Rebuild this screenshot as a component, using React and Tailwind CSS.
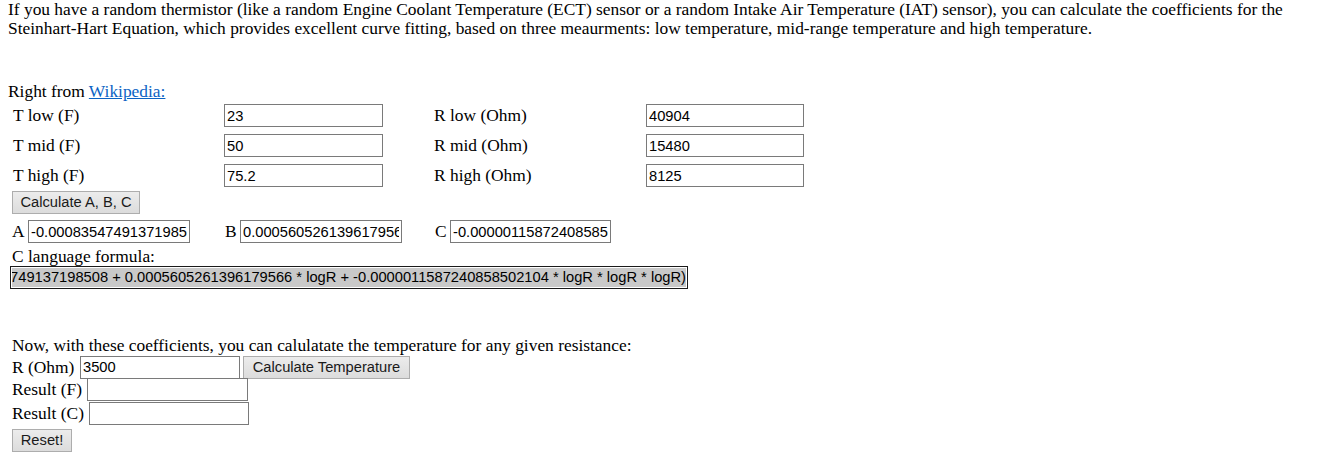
import { useState } from 'react'

const serif = { fontFamily: '"Liberation Serif", "Times New Roman", serif' }

const inputCls =
  'h-[23px] border border-[#7a7a7a] bg-white px-[2px] text-[14.7px] text-black outline-none font-["Liberation_Sans",Arial,sans-serif]'
const btnCls =
  'h-[23px] border border-[#adadad] bg-gradient-to-b from-[#ececec] to-[#dcdcdc] px-[7px] text-[14.7px] text-[#1a1a1a] font-["Liberation_Sans",Arial,sans-serif] leading-none whitespace-nowrap'

const fToK = (f) => ((f - 32) * 5) / 9 + 273.15

export default function App() {
  const [t, setT] = useState({ low: '23', mid: '50', high: '75.2' })
  const [r, setR] = useState({ low: '40904', mid: '15480', high: '8125' })
  const [abc, setAbc] = useState({
    a: '-0.0008354749137198508',
    b: '0.0005605261396179566',
    c: '-0.0000011587240858502104',
  })
  const [rOhm, setROhm] = useState('3500')
  const [resF, setResF] = useState('')
  const [resC, setResC] = useState('')

  const formula = `(1 / (${abc.a} + ${abc.b} * logR + ${abc.c} * logR * logR * logR)`

  const calcABC = () => {
    const L1 = Math.log(+r.low), L2 = Math.log(+r.mid), L3 = Math.log(+r.high)
    const Y1 = 1 / fToK(+t.low), Y2 = 1 / fToK(+t.mid), Y3 = 1 / fToK(+t.high)
    const g2 = (Y2 - Y1) / (L2 - L1)
    const g3 = (Y3 - Y1) / (L3 - L1)
    const C = ((g3 - g2) / (L3 - L2)) / (L1 + L2 + L3)
    const B = g2 - C * (L1 * L1 + L1 * L2 + L2 * L2)
    const A = Y1 - (B + L1 * L1 * C) * L1
    setAbc({ a: String(A), b: String(B), c: String(C) })
  }

  const calcTemp = () => {
    const logR = Math.log(+rOhm)
    const k = 1 / (+abc.a + +abc.b * logR + +abc.c * logR * logR * logR)
    const c = k - 273.15
    setResC(String(c))
    setResF(String((c * 9) / 5 + 32))
  }

  const reset = () => {
    setROhm('')
    setResF('')
    setResC('')
  }

  const rows = [
    ['low', 'T low (F)', 'R low (Ohm)'],
    ['mid', 'T mid (F)', 'R mid (Ohm)'],
    ['high', 'T high (F)', 'R high (Ohm)'],
  ]

  return (
    <div className="min-h-screen bg-white text-black text-[17.4px] leading-[19px]" style={serif}>
      <p className="px-2">
        If you have a random thermistor (like a random Engine Coolant Temperature (ECT) sensor or a random Intake Air
        Temperature (IAT) sensor), you can calculate the coefficients for the Steinhart-Hart Equation, which provides
        excellent curve fitting, based on three meaurments: low temperature, mid-range temperature and high temperature.
      </p>

      <div className="px-2 mt-[44px]">
        <div>
          Right from <a href="#" className="text-[#0b63c4] underline">Wikipedia:</a>
        </div>

        {/* measurement table */}
        <div className="mt-[3px] flex flex-col gap-[7px]">
          {rows.map(([key, tl, rl]) => (
            <div key={key} className="flex items-center h-[23px]">
              <span className="w-[216px] pl-[5px]">{tl}</span>
              <input
                className={`${inputCls} w-[159px]`}
                value={t[key]}
                onChange={(e) => setT({ ...t, [key]: e.target.value })}
              />
              <span className="w-[263px] pl-[51px]">{rl}</span>
              <input
                className={`${inputCls} w-[158px]`}
                value={r[key]}
                onChange={(e) => setR({ ...r, [key]: e.target.value })}
              />
            </div>
          ))}
        </div>

        <div className="mt-[4px] pl-[4px]">
          <button className={`${btnCls} w-[128px]`} onClick={calcABC}>
            Calculate A, B, C
          </button>
        </div>

        <div className="mt-[6px] pl-[4px] flex items-center h-[23px]">
          <span className="w-[16px]">A</span>
          <input className={`${inputCls} w-[162px]`} value={abc.a} readOnly />
          <span className="w-[15px] ml-[35px]">B</span>
          <input className={`${inputCls} w-[162px]`} value={abc.b} readOnly />
          <span className="w-[15px] ml-[33px]">C</span>
          <input className={`${inputCls} w-[161px]`} value={abc.c} readOnly />
        </div>

        <div className="mt-[4px] pl-[4px]">C language formula:</div>
        {/* formula box, selected and scrolled to its end */}
        <div className="pl-[2px]">
          <div className='h-[23px] w-[678px] border border-[#1a1a1a] bg-white p-[1px] text-[14.7px] text-black font-["Liberation_Sans",Arial,sans-serif]'>
            <div className="h-full bg-[#c9c9c9] flex items-center justify-end overflow-hidden whitespace-nowrap">
              <span>{formula}</span>
            </div>
          </div>
        </div>

        <div className="mt-[47px] pl-[4px]">
          Now, with these coefficients, you can calulatate the temperature for any given resistance:
        </div>
        <div className="mt-[1px] pl-[4px] flex items-center h-[22px]">
          <span className="w-[68px]">R (Ohm)</span>
          <input
            className={`${inputCls} w-[160px] h-[22px]`}
            value={rOhm}
            onChange={(e) => setROhm(e.target.value)}
          />
          <button className={`${btnCls} w-[167px] h-[22px] ml-[3px]`} onClick={calcTemp}>
            Calculate Temperature
          </button>
        </div>
        <div className="pl-[4px] flex items-center h-[23px]">
          <span className="w-[75px]">Result (F)</span>
          <input className={`${inputCls} w-[161px]`} value={resF} readOnly />
        </div>
        <div className="mt-[1px] pl-[4px] flex items-center h-[23px]">
          <span className="w-[77px]">Result (C)</span>
          <input className={`${inputCls} w-[160px]`} value={resC} readOnly />
        </div>
        <div className="mt-[4px] pl-[4px]">
          <button className={`${btnCls} w-[60px]`} onClick={reset}>
            Reset!
          </button>
        </div>
      </div>
    </div>
  )
}
